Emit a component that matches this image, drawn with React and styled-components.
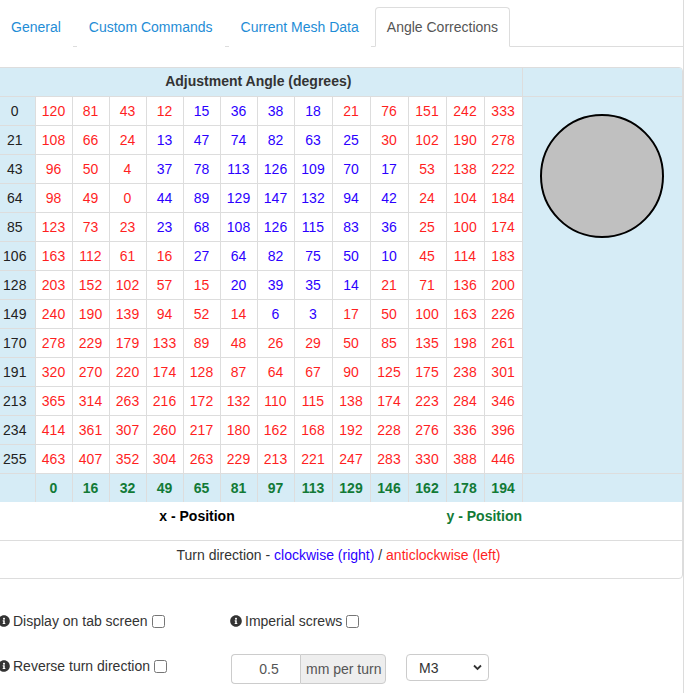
import React from 'react';
import styled, { createGlobalStyle } from 'styled-components';
import { FaInfoCircle } from 'react-icons/fa';

const GlobalStyle = createGlobalStyle`
  html, body {
    margin: 0;
    padding: 0;
    background: #fff;
    overflow: hidden;
  }
  body {
    font-family: "Liberation Sans", Arial, sans-serif;
    font-size: 14px;
    color: #333;
  }
  * { box-sizing: border-box; }
`;

const BLUE = '#2b00ff';
const RED = '#ff1f1f';
const GREEN = '#127a36';
const INFO_BG = '#d6ecf6';

const rowLabels = [0, 21, 43, 64, 85, 106, 128, 149, 170, 191, 213, 234, 255];
const colLabels = [0, 16, 32, 49, 65, 81, 97, 113, 129, 146, 162, 178, 194];

// b = clockwise (blue), r = anticlockwise (red)
const grid = [
  [[120, 'r'], [81, 'r'], [43, 'r'], [12, 'r'], [15, 'b'], [36, 'b'], [38, 'b'], [18, 'b'], [21, 'r'], [76, 'r'], [151, 'r'], [242, 'r'], [333, 'r']],
  [[108, 'r'], [66, 'r'], [24, 'r'], [13, 'b'], [47, 'b'], [74, 'b'], [82, 'b'], [63, 'b'], [25, 'b'], [30, 'r'], [102, 'r'], [190, 'r'], [278, 'r']],
  [[96, 'r'], [50, 'r'], [4, 'r'], [37, 'b'], [78, 'b'], [113, 'b'], [126, 'b'], [109, 'b'], [70, 'b'], [17, 'b'], [53, 'r'], [138, 'r'], [222, 'r']],
  [[98, 'r'], [49, 'r'], [0, 'r'], [44, 'b'], [89, 'b'], [129, 'b'], [147, 'b'], [132, 'b'], [94, 'b'], [42, 'b'], [24, 'r'], [104, 'r'], [184, 'r']],
  [[123, 'r'], [73, 'r'], [23, 'r'], [23, 'b'], [68, 'b'], [108, 'b'], [126, 'b'], [115, 'b'], [83, 'b'], [36, 'b'], [25, 'r'], [100, 'r'], [174, 'r']],
  [[163, 'r'], [112, 'r'], [61, 'r'], [16, 'r'], [27, 'b'], [64, 'b'], [82, 'b'], [75, 'b'], [50, 'b'], [10, 'b'], [45, 'r'], [114, 'r'], [183, 'r']],
  [[203, 'r'], [152, 'r'], [102, 'r'], [57, 'r'], [15, 'r'], [20, 'b'], [39, 'b'], [35, 'b'], [14, 'b'], [21, 'r'], [71, 'r'], [136, 'r'], [200, 'r']],
  [[240, 'r'], [190, 'r'], [139, 'r'], [94, 'r'], [52, 'r'], [14, 'r'], [6, 'b'], [3, 'b'], [17, 'r'], [50, 'r'], [100, 'r'], [163, 'r'], [226, 'r']],
  [[278, 'r'], [229, 'r'], [179, 'r'], [133, 'r'], [89, 'r'], [48, 'r'], [26, 'r'], [29, 'r'], [50, 'r'], [85, 'r'], [135, 'r'], [198, 'r'], [261, 'r']],
  [[320, 'r'], [270, 'r'], [220, 'r'], [174, 'r'], [128, 'r'], [87, 'r'], [64, 'r'], [67, 'r'], [90, 'r'], [125, 'r'], [175, 'r'], [238, 'r'], [301, 'r']],
  [[365, 'r'], [314, 'r'], [263, 'r'], [216, 'r'], [172, 'r'], [132, 'r'], [110, 'r'], [115, 'r'], [138, 'r'], [174, 'r'], [223, 'r'], [284, 'r'], [346, 'r']],
  [[414, 'r'], [361, 'r'], [307, 'r'], [260, 'r'], [217, 'r'], [180, 'r'], [162, 'r'], [168, 'r'], [192, 'r'], [228, 'r'], [276, 'r'], [336, 'r'], [396, 'r']],
  [[463, 'r'], [407, 'r'], [352, 'r'], [304, 'r'], [263, 'r'], [229, 'r'], [213, 'r'], [221, 'r'], [247, 'r'], [283, 'r'], [330, 'r'], [388, 'r'], [446, 'r']],
];

const colWidths = [40, 37, 37, 37, 37, 37, 37, 37, 38, 38, 38, 38, 38, 38];

export default function App() {
  return (
    <Page>
      <GlobalStyle />
      <Tabs>
        <Tab>General</Tab>
        <Tab>Custom Commands</Tab>
        <Tab>Current Mesh Data</Tab>
        <Tab $active>Angle Corrections</Tab>
      </Tabs>

      <Content>
        <Card>
          <Grid>
            <colgroup>
              {colWidths.map((w, i) => (
                <col key={i} style={{ width: w }} />
              ))}
              <col />
            </colgroup>
            <tbody>
              <tr>
                <HeadCell colSpan={14}>Adjustment Angle (degrees)</HeadCell>
                <HeadCell />
              </tr>
              {grid.map((row, r) => (
                <tr key={r}>
                  <LabelCell>{rowLabels[r]}</LabelCell>
                  {row.map(([v, d], c) => (
                    <ValueCell key={c} $dir={d}>
                      {v}
                    </ValueCell>
                  ))}
                  {r === 0 && (
                    <PreviewCell rowSpan={13}>
                      <Screw />
                    </PreviewCell>
                  )}
                </tr>
              ))}
              <tr>
                <LabelCell />
                {colLabels.map((v) => (
                  <FootCell key={v}>{v}</FootCell>
                ))}
                <LabelCell />
              </tr>
            </tbody>
          </Grid>

          <AxisRow>
            <AxisName>x - Position</AxisName>
            <AxisName $green $right>y - Position</AxisName>
          </AxisRow>

          <Legend>
            Turn direction - <Tone $c={BLUE}>clockwise (right)</Tone> /{' '}
            <Tone $c={RED}>anticlockwise (left)</Tone>
          </Legend>
        </Card>

        <Form>
          <FormRow>
            <Option>
              <InfoIcon />
              Display on tab screen
              <Check type="checkbox" />
            </Option>
            <Option>
              <InfoIcon />
              Imperial screws
              <Check type="checkbox" />
            </Option>
          </FormRow>
          <FormRow>
            <Option>
              <InfoIcon />
              Reverse turn direction
              <Check type="checkbox" />
            </Option>
            <Controls>
              <InputGroup>
                <Pitch defaultValue="0.5" />
                <Addon>mm per turn</Addon>
              </InputGroup>
              <Select>
                <span>M3</span>
                <svg width="9" height="7" viewBox="0 0 9 7">
                  <path d="M1 1.5 L4.5 5 L8 1.5" fill="none" stroke="#333" strokeWidth="1.8" />
                </svg>
              </Select>
            </Controls>
          </FormRow>
        </Form>
      </Content>
    </Page>
  );
}

const Page = styled.div`
  width: 684px;
  min-height: 100vh;
  border-right: 1px solid #dcdcdc;
`;

const Tabs = styled.ul`
  display: flex;
  list-style: none;
  margin: 0 0 0 -1px;
  padding: 7px 0 0;
  border-bottom: 1px solid #ddd;
`;

const Tab = styled.li`
  padding: 9px 11px;
  margin-right: 4px;
  margin-bottom: -1px;
  line-height: 20px;
  color: ${(p) => (p.$active ? '#555' : '#1f8dd6')};
  background: #fff;
  border: 1px solid ${(p) => (p.$active ? '#ddd' : 'transparent')};
  border-bottom-color: ${(p) => (p.$active ? '#fff' : 'transparent')};
  border-radius: 4px 4px 0 0;
`;

const Content = styled.div`
  margin-left: -6px;
  padding-top: 20px;
`;

const Card = styled.div`
  width: 689px;
  border: 1px solid #ddd;
  border-radius: 4px;
  overflow: hidden;
`;

const Grid = styled.table`
  width: 100%;
  table-layout: fixed;
  border-collapse: collapse;
  border-style: hidden;

  td {
    border: 1px solid #ddd;
    padding: 4px 0;
    line-height: 20px;
    height: 29px;
    text-align: center;
  }
`;

const HeadCell = styled.td`
  background: ${INFO_BG};
  font-weight: bold;

  && {
    height: 28px;
    padding: 3px 0 4px;
  }
`;

const LabelCell = styled.td`
  background: ${INFO_BG};
  color: #222;
`;

const ValueCell = styled.td`
  color: ${(p) => (p.$dir === 'b' ? BLUE : RED)};
`;

const FootCell = styled.td`
  background: ${INFO_BG};
  color: ${GREEN};
  font-weight: bold;
`;

const PreviewCell = styled.td`
  background: ${INFO_BG};
  vertical-align: top;

  && {
    padding: 17px 0 0;
  }
`;

const Screw = styled.div`
  width: 124px;
  height: 124px;
  margin: 0 auto;
  border: 2px solid #000;
  border-radius: 50%;
  background: #c0c0c0;
`;

const AxisRow = styled.div`
  display: flex;
  padding: 4px 0 14px;
  border-bottom: 1px solid #ddd;
  font-weight: bold;
  line-height: 20px;
`;

const AxisName = styled.div`
  flex: 0 0 ${(p) => (p.$right ? '123px' : '404px')};
  text-align: ${(p) => (p.$right ? 'right' : 'center')};
  color: ${(p) => (p.$green ? GREEN : '#000')};
`;

const Legend = styled.div`
  padding: 4px 0 13px;
  line-height: 20px;
  text-align: center;
`;

const Tone = styled.span`
  color: ${(p) => p.$c};
`;

const Form = styled.div`
  display: flex;
  flex-direction: column;
  gap: 25px;
  margin-top: 32px;
  margin-left: 4px;
`;

const FormRow = styled.div`
  display: grid;
  grid-template-columns: 232px 1fr;
  align-items: start;
`;

const Option = styled.label`
  display: flex;
  align-items: center;
  line-height: 20px;
`;

const InfoIcon = styled(FaInfoCircle)`
  flex: none;
  width: 12px;
  height: 12px;
  margin-right: 3px;
  color: #333;
`;

const Check = styled.input`
  width: 13px;
  height: 13px;
  margin: 0 0 0 4px;
`;

const Controls = styled.div`
  display: flex;
  align-items: flex-start;
  gap: 20px;
  margin: -10px 0 0 1px;
  padding-top: 8px;
`;

const InputGroup = styled.div`
  display: flex;
  height: 30px;
`;

const Pitch = styled.input`
  width: 69px;
  height: 30px;
  padding: 0 6px 0 12px;
  border: 1px solid #ccc;
  border-right: none;
  border-radius: 4px 0 0 4px;
  font: inherit;
  color: #555;
  text-align: center;
`;

const Addon = styled.span`
  display: flex;
  align-items: center;
  padding: 0 5px;
  width: 86px;
  background: #eee;
  border: 1px solid #ccc;
  border-radius: 0 4px 4px 0;
  color: #555;
  white-space: nowrap;
`;

const Select = styled.div`
  display: flex;
  align-items: center;
  justify-content: space-between;
  width: 83px;
  height: 27px;
  padding: 0 6px 0 12px;
  border: 1px solid #ccc;
  border-radius: 4px;
  color: #333;
`;
